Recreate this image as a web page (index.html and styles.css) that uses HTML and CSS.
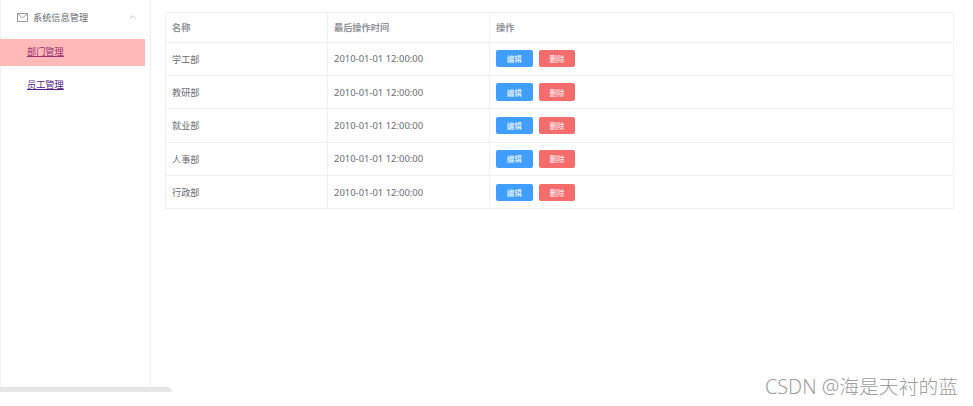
FILE: index.html
```html
<!DOCTYPE html>
<html lang="zh">
<head>
    <meta charset="UTF-8">
    <title>部门管理</title>
    <link rel="stylesheet" href="styles.css">
</head>
<body>
    <div class="app">
        <aside class="sidebar">
            <div class="menu-title">
                <svg class="mail-icon" width="11" height="9" viewBox="0 0 11 9" fill="none" stroke="#909399" stroke-width="0.9">
                    <rect x="0.5" y="0.5" width="10" height="8"/>
                    <path d="M0.7 0.9 5.5 4.8 10.3 0.9"/>
                </svg>
                <span class="menu-text">系统信息管理</span>
                <svg class="arrow-icon" width="7" height="4" viewBox="0 0 7 4" fill="none" stroke="#b4b7bd" stroke-width="0.8">
                    <path d="M0.5 3.5 3.5 0.7 6.5 3.5"/>
                </svg>
            </div>
            <a class="menu-item active" href="#">部门管理</a>
            <a class="menu-item" href="#">员工管理</a>
        </aside>
        <main class="main">
            <table class="data-table">
                <thead>
                    <tr><th class="col-name">名称</th><th class="col-time">最后操作时间</th><th>操作</th></tr>
                </thead>
                <tbody>
                    <tr>
                        <td>学工部</td><td class="time">2010-01-01 12:00:00</td>
                        <td><button class="btn edit">编辑</button><button class="btn del">删除</button></td>
                    </tr>
                    <tr>
                        <td>教研部</td><td class="time">2010-01-01 12:00:00</td>
                        <td><button class="btn edit">编辑</button><button class="btn del">删除</button></td>
                    </tr>
                    <tr>
                        <td>就业部</td><td class="time">2010-01-01 12:00:00</td>
                        <td><button class="btn edit">编辑</button><button class="btn del">删除</button></td>
                    </tr>
                    <tr>
                        <td>人事部</td><td class="time">2010-01-01 12:00:00</td>
                        <td><button class="btn edit">编辑</button><button class="btn del">删除</button></td>
                    </tr>
                    <tr>
                        <td>行政部</td><td class="time">2010-01-01 12:00:00</td>
                        <td><button class="btn edit">编辑</button><button class="btn del">删除</button></td>
                    </tr>
                </tbody>
            </table>
        </main>
    </div>
    <div class="scroll-track"><div class="scroll-thumb"></div></div>
    <div class="watermark">CSDN @海是天衬的蓝</div>
</body>
</html>
```

FILE: styles.css
```css
html, body {
    margin: 0;
    height: 100%;
}
body {
    background: #fff;
    font-family: "Noto Sans", "Noto Sans CJK SC", sans-serif;
    color: #6b6d72;
    overflow: hidden;
    position: relative;
}
.app {
    display: flex;
    height: 387px;
}
.sidebar {
    width: 151px;
    box-sizing: border-box;
    border-right: 1px solid #eeeff2;
    border-left: 1px solid #f2f2f2;
    padding-right: 5px;
    flex-shrink: 0;
}
.menu-title {
    display: flex;
    align-items: center;
    height: 34px;
    padding-left: 16px;
    font-size: 9.2px;
    color: #66686e;
}
.menu-text {
    margin-left: 5px;
    flex: 1;
}
.arrow-icon {
    margin-right: 9px;
}
.menu-item {
    display: block;
    height: 27px;
    line-height: 26px;
    margin-top: 5px;
    padding-left: 26px;
    font-size: 9.2px;
    color: #551a8b;
}
.menu-item + .menu-item {
    margin-top: 6px;
}
.menu-item.active {
    background: #ffb9b9;
    margin-left: -1px;
    padding-left: 27px;
    color: #a0306e;
}
.main {
    flex: 1;
    padding: 12px 19px 0 14px;
}
.data-table {
    width: 100%;
    border-collapse: collapse;
    table-layout: fixed;
    font-size: 9.2px;
    border: 1px solid #f0f1f5;
}
.data-table th, .data-table td {
    border: 1px solid #f0f1f5;
    padding: 0 0 0 6px;
    text-align: left;
}
.data-table th {
    height: 28.5px;
    font-weight: 700;
    color: #909399;
}
.data-table td {
    height: 32.4px;
}
.data-table .time {
    font-size: 9.45px;
}
.col-name, .col-time {
    width: 155px;
}
.btn {
    display: inline-block;
    width: 36.6px;
    height: 17.4px;
    border: none;
    border-radius: 2px;
    padding: 0;
    color: #fff;
    font-family: inherit;
    font-size: 7.5px;
    vertical-align: middle;
}
.btn.edit {
    background: #409eff;
}
.btn.del {
    background: #f56c6c;
    margin-left: 6px;
}
.scroll-track {
    height: 5px;
}
.scroll-thumb {
    width: 172px;
    height: 5px;
    background: #e5e5e5;
    border-top-right-radius: 6px;
}
.watermark {
    position: absolute;
    right: 15px;
    bottom: 7px;
    font-size: 19.8px;
    line-height: 24px;
    font-weight: 300;
    color: #9e9e9e;
}
```
